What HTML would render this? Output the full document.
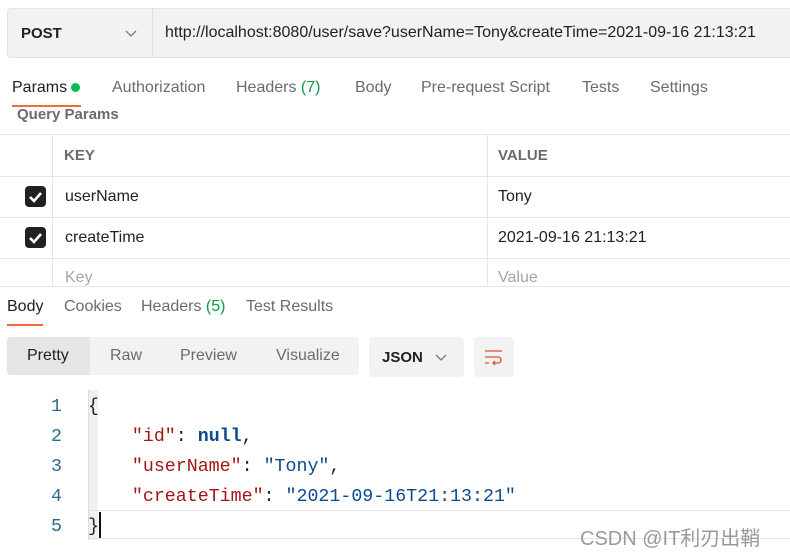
<!DOCTYPE html>
<html><head><meta charset="utf-8"><style>
*{margin:0;padding:0;box-sizing:border-box}
body{width:790px;height:553px;background:#fff;font-family:"Liberation Sans",sans-serif;color:#212121;position:relative;overflow:hidden;font-size:16px}
.a{position:absolute;white-space:nowrap}
.mono{font-family:"Liberation Mono","DejaVu Sans Mono",monospace;font-size:18.3px}
.hl{position:absolute;left:0;width:790px;height:1px;background:#e6e6e6}
.cb{position:absolute;left:25px;width:21px;height:21px;background:#212121;border-radius:4px}
.tab{color:#6b6b6b}
</style></head><body>
<div class="a" style="left:7px;top:8px;width:800px;height:50px;background:#f2f2f2;border:1px solid #e4e4e4;border-radius:4px"></div>
<div class="a" style="left:152px;top:9px;width:1px;height:48px;background:#e0e0e0"></div>
<div class="a" style="left:21px;top:25px;font-weight:bold;font-size:15px">POST</div>
<svg class="a" style="left:125px;top:30px" width="12" height="8"><path d="M1 1l5 5 5-5" stroke="#777" fill="none" stroke-width="1.3"/></svg>
<div class="a" style="left:165px;top:24px">http://localhost:8080/user/save?userName=Tony&amp;createTime=2021-09-16 21:13:21</div>

<div class="a" style="left:12px;top:79px">Params</div>
<div class="a" style="left:71px;top:83px;width:9px;height:9px;border-radius:50%;background:#0cbb52"></div>
<div class="a" style="left:12px;top:105px;width:69px;height:2px;background:#f26b3a"></div>
<div class="a tab" style="left:112px;top:79px">Authorization</div>
<div class="a tab" style="left:236px;top:79px">Headers <span style="color:#0a9b45">(7)</span></div>
<div class="a tab" style="left:355px;top:79px">Body</div>
<div class="a tab" style="left:421px;top:79px">Pre-request Script</div>
<div class="a tab" style="left:582px;top:79px">Tests</div>
<div class="a tab" style="left:650px;top:79px">Settings</div>
<div class="a" style="left:17px;top:106px;font-weight:bold;color:#6b6b6b;font-size:15px">Query Params</div>

<div class="hl" style="top:134px"></div>
<div class="hl" style="top:176px"></div>
<div class="hl" style="top:217px"></div>
<div class="hl" style="top:258px"></div>
<div class="hl" style="top:286px"></div>
<div class="a" style="left:52px;top:134px;width:1px;height:152px;background:#e6e6e6"></div>
<div class="a" style="left:487px;top:134px;width:1px;height:152px;background:#e6e6e6"></div>
<div class="a" style="left:64px;top:147px;font-weight:bold;color:#6b6b6b;font-size:15px">KEY</div>
<div class="a" style="left:498px;top:147px;font-weight:bold;color:#6b6b6b;font-size:15px">VALUE</div>
<div class="cb" style="top:186px"></div>
<svg class="a" style="left:25px;top:186px" width="21" height="21"><path d="M5 11l4 4 7-8" stroke="#fff" stroke-width="2.6" fill="none"/></svg>
<div class="cb" style="top:227px"></div>
<svg class="a" style="left:25px;top:227px" width="21" height="21"><path d="M5 11l4 4 7-8" stroke="#fff" stroke-width="2.6" fill="none"/></svg>
<div class="a" style="left:65px;top:188px">userName</div>
<div class="a" style="left:498px;top:188px">Tony</div>
<div class="a" style="left:65px;top:229px">createTime</div>
<div class="a" style="left:498px;top:229px">2021-09-16 21:13:21</div>
<div class="a" style="left:65px;top:269px;color:#a6a6a6">Key</div>
<div class="a" style="left:498px;top:269px;color:#a6a6a6">Value</div>

<div class="a" style="left:7px;top:298px">Body</div>
<div class="a" style="left:7px;top:324px;width:36px;height:2px;background:#f26b3a"></div>
<div class="a tab" style="left:64px;top:298px">Cookies</div>
<div class="a tab" style="left:141px;top:298px">Headers <span style="color:#0a9b45">(5)</span></div>
<div class="a tab" style="left:246px;top:298px">Test Results</div>

<div class="a" style="left:7px;top:337px;width:352px;height:38px;background:#f2f2f2;border-radius:4px"></div>
<div class="a" style="left:7px;top:337px;width:83px;height:38px;background:#e6e6e6;border-radius:4px 0 0 4px"></div>
<div class="a" style="left:27px;top:347px">Pretty</div>
<div class="a tab" style="left:110px;top:347px">Raw</div>
<div class="a tab" style="left:180px;top:347px">Preview</div>
<div class="a tab" style="left:276px;top:347px">Visualize</div>
<div class="a" style="left:369px;top:337px;width:95px;height:40px;background:#f2f2f2;border-radius:4px"></div>
<div class="a" style="left:382px;top:349px;font-weight:bold;font-size:15px">JSON</div>
<svg class="a" style="left:435px;top:354px" width="12" height="8"><path d="M1 1l5 5 5-5" stroke="#777" fill="none" stroke-width="1.3"/></svg>
<div class="a" style="left:474px;top:337px;width:40px;height:40px;background:#f2f2f2;border-radius:4px"></div>
<svg class="a" style="left:484px;top:347px" width="20" height="20"><path d="M1 4h17M1 10h13a3 3 0 0 1 0 6h-5M11 14l-2 2 2 2M1 16h4" stroke="#d0583a" fill="none" stroke-width="1.3"/></svg>

<div class="a" style="left:88px;top:390px;width:10px;height:150px;background:#f0f0f0;border-left:1px solid #ddd"></div>
<div class="a" style="left:88px;top:510px;width:702px;height:1px;background:#e4e4e4"></div>
<div class="a" style="left:88px;top:538px;width:702px;height:1px;background:#e4e4e4"></div>
<div class="a mono" style="left:51px;top:392px;color:#2d6b8a;line-height:30px">1<br>2<br>3<br>4<br>5</div>
<div class="a mono" style="left:88px;top:392px;line-height:30px;color:#212121">{<br>&nbsp;&nbsp;&nbsp;&nbsp;<span style="color:#a31515">"id"</span>: <b style="color:#0b4a8f">null</b>,<br>&nbsp;&nbsp;&nbsp;&nbsp;<span style="color:#a31515">"userName"</span>: <span style="color:#0b4a8f">"Tony"</span>,<br>&nbsp;&nbsp;&nbsp;&nbsp;<span style="color:#a31515">"createTime"</span>: <span style="color:#0b4a8f">"2021-09-16T21:13:21"</span><br>}</div>
<div class="a" style="left:99px;top:512px;width:2px;height:26px;background:#111"></div>
<div class="a" style="left:580px;top:522px;font-size:20px;color:#999;font-family:'Liberation Sans','Noto Sans CJK SC',sans-serif">CSDN @IT利刃出鞘</div>
</body></html>
